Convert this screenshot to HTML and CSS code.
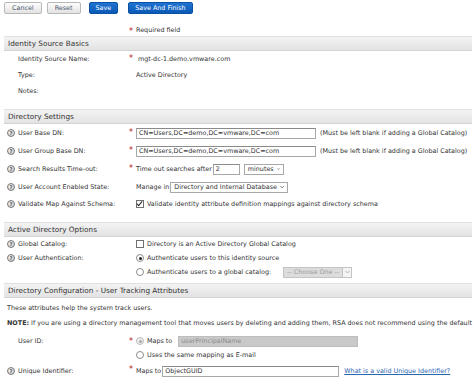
FILE: index.html
```html
<!DOCTYPE html>
<html lang="en">
<head>
    <meta charset="UTF-8">
    <title>Identity Source</title>
    <link rel="stylesheet" href="styles.css">
</head>
<body>
    <div class="page">
        <div class="toolbar">
            <button class="btn btn-light">Cancel</button>
            <button class="btn btn-light">Reset</button>
            <button class="btn btn-blue btn-save">Save</button>
            <button class="btn btn-blue">Save And Finish</button>
        </div>

        <div class="row row-required">
            <span></span><span></span>
            <span class="req">*</span>
            <span class="value">Required field</span>
        </div>

        <div class="section section-basics">
            <h2 class="section-title">Identity Source Basics</h2>
            <div class="row">
                <span></span>
                <span class="label">Identity Source Name:</span>
                <span class="req">*</span>
                <span class="value value-host">mgt-dc-1.demo.vmware.com</span>
            </div>
            <div class="row">
                <span></span>
                <span class="label">Type:</span>
                <span></span>
                <span class="value">Active Directory</span>
            </div>
            <div class="row">
                <span></span>
                <span class="label">Notes:</span>
                <span></span>
                <span class="value"></span>
            </div>
        </div>

        <div class="section section-settings">
            <h2 class="section-title">Directory Settings</h2>
            <div class="row">
                <span class="help">?</span>
                <span class="label">User Base DN:</span>
                <span class="req">*</span>
                <span class="value">
                    <input class="field field-dn" type="text" value="CN=Users,DC=demo,DC=vmware,DC=com">
                    <span class="hint">(Must be left blank if adding a Global Catalog)</span>
                </span>
            </div>
            <div class="row">
                <span class="help">?</span>
                <span class="label">User Group Base DN:</span>
                <span class="req">*</span>
                <span class="value">
                    <input class="field field-dn" type="text" value="CN=Users,DC=demo,DC=vmware,DC=com">
                    <span class="hint">(Must be left blank if adding a Global Catalog)</span>
                </span>
            </div>
            <div class="row">
                <span class="help">?</span>
                <span class="label">Search Results Time-out:</span>
                <span class="req">*</span>
                <span class="value value-tight">
                    Time out searches after<input class="field field-num" type="text" value="2">
                    <span class="select select-minutes">minutes <svg class="arrow" viewBox="0 0 6 4"><polyline points="0.5,0.5 3,3.2 5.5,0.5"/></svg></span>
                </span>
            </div>
            <div class="row">
                <span class="help">?</span>
                <span class="label">User Account Enabled State:</span>
                <span></span>
                <span class="value value-tight">
                    Manage in <span class="select select-manage">Directory and Internal Database <svg class="arrow" viewBox="0 0 6 4"><polyline points="0.5,0.5 3,3.2 5.5,0.5"/></svg></span>
                </span>
            </div>
            <div class="row">
                <span class="help">?</span>
                <span class="label">Validate Map Against Schema:</span>
                <span></span>
                <span class="value">
                    <span class="check checked"></span>
                    Validate identity attribute definition mappings against directory schema
                </span>
            </div>
        </div>

        <div class="section section-options">
            <h2 class="section-title">Active Directory Options</h2>
            <div class="row">
                <span class="help">?</span>
                <span class="label">Global Catalog:</span>
                <span></span>
                <span class="value">
                    <span class="check"></span>
                    Directory is an Active Directory Global Catalog
                </span>
            </div>
            <div class="row">
                <span class="help">?</span>
                <span class="label">User Authentication:</span>
                <span></span>
                <span class="value">
                    <span class="radio checked"></span>
                    Authenticate users to this identity source
                </span>
            </div>
            <div class="row">
                <span></span><span></span><span></span>
                <span class="value">
                    <span class="radio"></span>
                    Authenticate users to a global catalog:
                    <span class="select select-disabled">-- Choose One -- <span class="arrow-box"><svg class="arrow" viewBox="0 0 6 4"><polyline points="0.5,0.5 3,3.2 5.5,0.5"/></svg></span></span>
                </span>
            </div>
        </div>

        <div class="section section-tracking">
            <h2 class="section-title">Directory Configuration - User Tracking Attributes</h2>
            <p class="note">These attributes help the system track users.</p>
            <p class="note note-warn"><b>NOTE:</b> If you are using a directory management tool that moves users by deleting and adding them, RSA does not recommend using the default user ID mapping.</p>
            <div class="row row-userid">
                <span></span>
                <span class="label">User ID:</span>
                <span class="req">*</span>
                <span class="value">
                    <span class="radio checked disabled"></span>
                    Maps to
                    <input class="field field-mapped" type="text" value="userPrincipalName" disabled>
                </span>
            </div>
            <div class="row row-userid">
                <span></span><span></span><span></span>
                <span class="value">
                    <span class="radio"></span>
                    Uses the same mapping as E-mail
                </span>
            </div>
            <div class="row">
                <span class="help">?</span>
                <span class="label">Unique Identifier:</span>
                <span class="req">*</span>
                <span class="value value-tight">
                    Maps to <input class="field field-guid" type="text" value="ObjectGUID">
                    <a class="link" href="#">What is a valid Unique Identifier?</a>
                </span>
            </div>
        </div>
    </div>
</body>
</html>
```

FILE: styles.css
```css
body {
    margin: 0;
    background: #fff;
    color: #333;
    font-family: 'DejaVu Sans', Verdana, sans-serif;
    font-size: 6.4px;
    overflow: hidden;
}
.page {
    width: 468px;
    padding: 2px 0 0 4px;
}

/* buttons */
.toolbar {
    display: flex;
    height: 12px;
}
.btn {
    font-family: inherit;
    font-size: 6.4px;
    height: 12px;
    padding: 0 7px;
    margin: 0 5px 0 0;
    border-radius: 2px;
    line-height: 10px;
}
.btn-light {
    color: #4b5a70;
    border: 1px solid #b8b8b8;
    background: linear-gradient(#fdfdfd, #e2e2e2);
}
.btn-blue {
    color: #fff;
    border: 1px solid #0a50a3;
    background: linear-gradient(#2173d2, #0b59b5);
    padding: 0 6px;
    margin-right: 10px;
}
.btn-save {
    margin-left: 3px;
}

/* rows */
.row {
    display: grid;
    grid-template-columns: 11px 111px 7px 1fr;
    align-items: center;
    height: 16px;
    padding-left: 3px;
    white-space: nowrap;
}
.row-required {
    margin-top: 10px;
    height: 12px;
}
.req {
    color: #b01818;
    font-size: 8px;
    line-height: 6px;
    padding-top: 5px;
    align-self: start;
}
.section-settings .req {
    padding-top: 6px;
}
.value {
    display: flex;
    align-items: center;
    gap: 3px;
}
.value-tight {
    gap: 1px;
}
.value-host {
    padding-left: 2px;
}

.help {
    width: 6px;
    height: 6px;
    border: 1px solid #7a7a7a;
    border-radius: 50%;
    background: radial-gradient(circle at 40% 35%, #fafafa, #bdbdbd);
    color: #444;
    font-size: 5px;
    font-weight: bold;
    line-height: 6px;
    text-align: center;
}

/* sections */
.section {
    margin-bottom: 10px;
}
.section-title {
    margin: 0;
    height: 13px;
    line-height: 13px;
    padding-left: 4px;
    font-size: 7.3px;
    font-weight: normal;
    color: #333;
    background: linear-gradient(#f3f3f3, #e3e3e3);
    border-top: 1px solid #e0e0e0;
    border-bottom: 1px solid #d4d4d4;
}
.section-settings .row {
    height: 18px;
}
.section-settings .row:last-child {
    height: 16px;
}
.section-options {
    margin-bottom: 4px;
}
.section-options .row {
    height: 14px;
}
.section-tracking .row-userid {
    height: 14px;
}
.section-tracking .row:last-child {
    height: 18px;
}

/* form fields */
.field {
    font-family: inherit;
    font-size: 6.4px;
    color: #333;
    height: 11px;
    box-sizing: border-box;
    padding: 0 2px;
    margin: 0;
    border: 1px solid #a8a8a8;
    border-top-color: #8a8a8a;
    background: #fff;
}
.field-dn {
    width: 180px;
}
.field-num {
    width: 27px;
}
.field-mapped {
    width: 180px;
    margin-left: 3px;
    background: #c9c9c9;
    color: #8a8a8a;
    border-color: #bdbdbd;
}
.field-guid {
    width: 177px;
}
.hint {
    margin-left: 1px;
}
.select {
    display: inline-flex;
    align-items: center;
    justify-content: space-between;
    height: 11px;
    box-sizing: border-box;
    padding: 0 3px;
    border: 1px solid #a8a8a8;
    background: #fff;
}
.select-minutes {
    width: 40px;
    margin-left: 3px;
}
.select-manage {
    width: 118px;
}
.select-disabled {
    width: 69px;
    margin-left: 9px;
    background: #dcdcdc;
    color: #9a9a9a;
    border-color: #c4c4c4;
    padding-right: 0;
}
.arrow {
    width: 5px;
    height: 4px;
    margin-left: 3px;
    fill: none;
    stroke: #555;
    stroke-width: 1;
}
.arrow-box {
    display: flex;
    align-items: center;
    justify-content: center;
    height: 100%;
    width: 8px;
    background: #f4f4f4;
    border-left: 1px solid #c4c4c4;
}
.arrow-box .arrow {
    margin: 0;
    stroke: #aaa;
}

.check {
    width: 6px;
    height: 6px;
    border: 1px solid #707070;
    background: #fff;
    position: relative;
}
.check.checked::after {
    content: '';
    position: absolute;
    left: 1px;
    top: -1px;
    width: 2px;
    height: 5px;
    border-right: 1.5px solid #222;
    border-bottom: 1.5px solid #222;
    transform: rotate(40deg);
}
.radio {
    width: 6px;
    height: 6px;
    border: 1px solid #8c8c8c;
    border-radius: 50%;
    background: #fff;
    position: relative;
}
.radio.checked::after {
    content: '';
    position: absolute;
    left: 1.5px;
    top: 1.5px;
    width: 3px;
    height: 3px;
    border-radius: 50%;
    background: #222;
}
.radio.disabled {
    border-color: #bbb;
    background: #eee;
}
.radio.disabled::after {
    background: #aaa;
}

/* tracking text */
.note {
    margin: 4px 0 0 3px;
    line-height: 12px;
    white-space: nowrap;
}
.note-warn {
    margin-top: 3px;
    margin-bottom: 5px;
}
.link {
    color: #2a66b0;
    margin-left: 4px;
}
```
